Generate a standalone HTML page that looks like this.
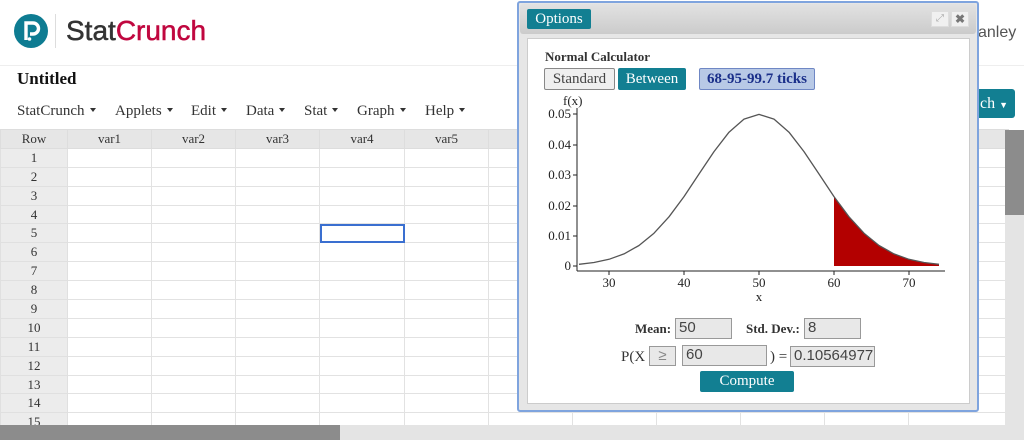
<!DOCTYPE html>
<html><head><meta charset="utf-8"><style>
*{margin:0;padding:0;box-sizing:border-box}
html,body{width:1024px;height:440px;overflow:hidden}
body{background:#fff;position:relative;font-family:"Liberation Serif",serif;color:#222}
.a{position:absolute}
.menu span{position:absolute;white-space:nowrap}
.tri{display:inline-block;width:0;height:0;border-left:3.5px solid transparent;border-right:3.5px solid transparent;border-top:4px solid #333;vertical-align:middle;margin-left:5px;position:relative;top:-2px}
table{border-collapse:collapse;position:absolute;left:0;top:129px}
td{border:1px solid #e2e2e2;height:18.9px;font-size:13px;text-align:center;padding:0;color:#333;line-height:16px}
td.r{background:#ececec;width:67px;border-color:#e0e0e0}
tr.h td{background:#e6e6e6;border-color:#ddd}
.btn{position:absolute;font-size:15px;text-align:center;line-height:20px}
.box{position:absolute;background:#e8e8e8;border:1px solid #999;font-size:15px;padding-left:3px;line-height:18px;font-family:"Liberation Sans",sans-serif;color:#444}
</style></head><body>
<svg class="a" style="left:13px;top:13px" width="36" height="36" viewBox="0 0 36 36"><circle cx="18" cy="18" r="17" fill="#0e7c92"/><path d="M13 27V10h7a5.5 5.5 0 0 1 0 11h-3" stroke="#fff" stroke-width="3.4" fill="none"/><circle cx="16.5" cy="26" r="1.8" fill="#fff"/></svg>
<div class="a" style="left:55px;top:14px;width:1px;height:34px;background:#ddd"></div>
<div class="a" style="left:66px;top:15px;font:28px 'Liberation Sans',sans-serif;color:#333;-webkit-text-stroke:0.5px">Stat<span style="color:#c0073f">Crunch</span></div>
<div class="a" style="left:0;top:65px;width:1024px;height:1px;background:#eee"></div>
<div class="a" style="left:17px;top:69px;font-weight:bold;font-size:17px;color:#111">Untitled</div>
<div class="a menu" style="left:0;top:103px;font-size:15px;color:#333">
<span style="left:17px">StatCrunch<i class="tri"></i></span><span style="left:115px">Applets<i class="tri"></i></span><span style="left:191px">Edit<i class="tri"></i></span><span style="left:246px">Data<i class="tri"></i></span><span style="left:304px">Stat<i class="tri"></i></span><span style="left:357px">Graph<i class="tri"></i></span><span style="left:425px">Help<i class="tri"></i></span></div>
<div class="a" style="left:978px;top:24px;font:16px 'Liberation Sans',sans-serif;color:#555">anley</div>
<div class="a" style="left:960px;top:89px;width:55px;height:29px;background:#127f92;border-radius:3px;color:#fff;font-size:16px;line-height:29px;padding-left:20px">ch <span style="font-size:9px">▼</span></div>
<table>
<tr class="h"><td class="r">Row</td><td style="width:84px">var1</td><td style="width:84px">var2</td><td style="width:84px">var3</td><td style="width:85px">var4</td><td style="width:84px">var5</td><td style="width:84px"></td><td style="width:84px"></td><td style="width:84px"></td><td style="width:84px"></td><td style="width:84px"></td><td style="width:100px"></td></tr>
<tr><td class="r">1</td><td></td><td></td><td></td><td></td><td></td><td></td><td></td><td></td><td></td><td></td><td></td></tr>
<tr><td class="r">2</td><td></td><td></td><td></td><td></td><td></td><td></td><td></td><td></td><td></td><td></td><td></td></tr>
<tr><td class="r">3</td><td></td><td></td><td></td><td></td><td></td><td></td><td></td><td></td><td></td><td></td><td></td></tr>
<tr><td class="r">4</td><td></td><td></td><td></td><td></td><td></td><td></td><td></td><td></td><td></td><td></td><td></td></tr>
<tr><td class="r">5</td><td></td><td></td><td></td><td style="outline:2px solid #3a6fd0;outline-offset:-2px"></td><td></td><td></td><td></td><td></td><td></td><td></td><td></td></tr>
<tr><td class="r">6</td><td></td><td></td><td></td><td></td><td></td><td></td><td></td><td></td><td></td><td></td><td></td></tr>
<tr><td class="r">7</td><td></td><td></td><td></td><td></td><td></td><td></td><td></td><td></td><td></td><td></td><td></td></tr>
<tr><td class="r">8</td><td></td><td></td><td></td><td></td><td></td><td></td><td></td><td></td><td></td><td></td><td></td></tr>
<tr><td class="r">9</td><td></td><td></td><td></td><td></td><td></td><td></td><td></td><td></td><td></td><td></td><td></td></tr>
<tr><td class="r">10</td><td></td><td></td><td></td><td></td><td></td><td></td><td></td><td></td><td></td><td></td><td></td></tr>
<tr><td class="r">11</td><td></td><td></td><td></td><td></td><td></td><td></td><td></td><td></td><td></td><td></td><td></td></tr>
<tr><td class="r">12</td><td></td><td></td><td></td><td></td><td></td><td></td><td></td><td></td><td></td><td></td><td></td></tr>
<tr><td class="r">13</td><td></td><td></td><td></td><td></td><td></td><td></td><td></td><td></td><td></td><td></td><td></td></tr>
<tr><td class="r">14</td><td></td><td></td><td></td><td></td><td></td><td></td><td></td><td></td><td></td><td></td><td></td></tr>
<tr><td class="r">15</td><td></td><td></td><td></td><td></td><td></td><td></td><td></td><td></td><td></td><td></td><td></td></tr>
<tr><td class="r">16</td><td></td><td></td><td></td><td></td><td></td><td></td><td></td><td></td><td></td><td></td><td></td></tr>
</table>
<div class="a" style="left:1005px;top:130px;width:19px;height:295px;background:#e4e4e4"></div>
<div class="a" style="left:1005px;top:130px;width:19px;height:85px;background:#8c8c8c"></div>
<div class="a" style="left:0;top:425px;width:1024px;height:15px;background:#e4e4e4"></div>
<div class="a" style="left:0;top:425px;width:340px;height:15px;background:#8c8c8c"></div>
<div class="a" style="left:517px;top:1px;width:462px;height:411px;border:2px solid #7fa4de;border-radius:3px;background:#e6e6e6"></div>
<div class="a" style="left:520px;top:4px;width:456px;height:30px;background:linear-gradient(#e2e2e2,#cbcbcb);border-radius:3px"></div>
<div class="btn" style="left:527px;top:9px;width:64px;height:20px;background:#127f92;color:#fff;border-radius:2px">Options</div>
<div class="a" style="left:931px;top:11px;width:18px;height:16px;background:#f0f0f0;border:1px solid #ddd;font-size:10px;color:#aaa;text-align:center;line-height:14px">⤢</div>
<div class="a" style="left:951px;top:11px;width:18px;height:16px;background:#f0f0f0;border:1px solid #ddd;font:bold 12px 'Liberation Sans';color:#777;text-align:center;line-height:14px">✖</div>
<div class="a" style="left:527px;top:38px;width:443px;height:366px;background:#fff;border:1px solid #ccc"></div>
<div class="a" style="left:545px;top:49px;font-weight:bold;font-size:13px;color:#333">Normal Calculator</div>
<div class="btn" style="left:544px;top:68px;width:71px;height:22px;background:#efefef;border:1px solid #888;color:#444;border-radius:2px">Standard</div>
<div class="btn" style="left:618px;top:68px;width:68px;height:22px;background:#127f92;color:#fff;border-radius:2px;line-height:22px">Between</div>
<div class="btn" style="left:699px;top:68px;width:116px;height:22px;background:#b8c9e6;border:1px solid #6f87c4;color:#1a2f8a;font-weight:bold;border-radius:2px">68-95-99.7 ticks</div>
<svg class="a" style="left:0;top:0" width="1024" height="440">
<g font-family="Liberation Serif" font-size="13" fill="#222">
<text x="563" y="105">f(x)</text>
<text x="571" y="118" text-anchor="end">0.05</text>
<text x="571" y="149" text-anchor="end">0.04</text>
<text x="571" y="179" text-anchor="end">0.03</text>
<text x="571" y="210" text-anchor="end">0.02</text>
<text x="571" y="240" text-anchor="end">0.01</text>
<text x="571" y="270" text-anchor="end">0</text>
<text x="609" y="287" text-anchor="middle">30</text>
<text x="684" y="287" text-anchor="middle">40</text>
<text x="759" y="287" text-anchor="middle">50</text>
<text x="834" y="287" text-anchor="middle">60</text>
<text x="909" y="287" text-anchor="middle">70</text>
<text x="759" y="301" text-anchor="middle">x</text>
</g>
<g stroke="#222" stroke-width="1">
<line x1="577" y1="108" x2="577" y2="271"/>
<line x1="577" y1="271" x2="945" y2="271"/>
<line x1="573" y1="114" x2="577" y2="114"/><line x1="573" y1="145" x2="577" y2="145"/><line x1="573" y1="175" x2="577" y2="175"/><line x1="573" y1="206" x2="577" y2="206"/><line x1="573" y1="236" x2="577" y2="236"/><line x1="573" y1="266" x2="577" y2="266"/>
<line x1="609" y1="271" x2="609" y2="275"/><line x1="684" y1="271" x2="684" y2="275"/><line x1="759" y1="271" x2="759" y2="275"/><line x1="834" y1="271" x2="834" y2="275"/><line x1="909" y1="271" x2="909" y2="275"/>
</g>
<path d="M834 266L834 196.6L849 216.8L864 233.2L879 245.5L894 253.9L909 259.3L924 262.5L939 264.3L939 266Z" fill="#b30000"/>
<path d="M579 264.3L594 262.5L609 259.3L624 253.9L639 245.5L654 233.2L669 216.8L684 196.6L699 174L714 151.6L729 132.2L744 119.1L759 114.4L774 119.1L789 132.2L804 151.6L819 174L834 196.6L849 216.8L864 233.2L879 245.5L894 253.9L909 259.3L924 262.5L939 264.3" fill="none" stroke="#555" stroke-width="1.3" stroke-linejoin="round"/>
</svg>
<div class="a" style="left:635px;top:321px;font-weight:bold;font-size:13px;color:#333">Mean:</div>
<div class="box" style="left:675px;top:318px;width:57px;height:21px">50</div>
<div class="a" style="left:746px;top:321px;font-weight:bold;font-size:13px;color:#333">Std. Dev.:</div>
<div class="box" style="left:804px;top:318px;width:57px;height:21px">8</div>
<div class="a" style="left:621px;top:349px;font-size:15px;color:#333">P(X</div>
<div class="box" style="left:649px;top:346px;width:27px;height:20px;text-align:center;padding:0;color:#888">≥</div>
<div class="box" style="left:682px;top:345px;width:85px;height:21px">60</div>
<div class="a" style="left:770px;top:349px;font-size:15px;color:#333">) =</div>
<div class="box" style="left:790px;top:346px;width:85px;height:21px">0.10564977</div>
<div class="btn" style="left:700px;top:371px;width:94px;height:21px;background:#127f92;color:#fff;border-radius:2px">Compute</div>
</body></html>
